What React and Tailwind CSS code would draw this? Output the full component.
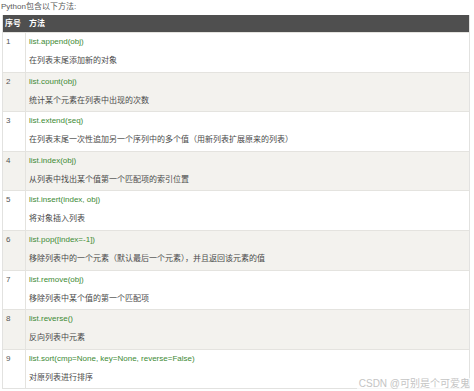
const methods = [
  ["list.append(obj)", "在列表末尾添加新的对象"],
  ["list.count(obj)", "统计某个元素在列表中出现的次数"],
  ["list.extend(seq)", "在列表末尾一次性追加另一个序列中的多个值（用新列表扩展原来的列表）"],
  ["list.index(obj)", "从列表中找出某个值第一个匹配项的索引位置"],
  ["list.insert(index, obj)", "将对象插入列表"],
  ["list.pop([index=-1])", "移除列表中的一个元素（默认最后一个元素），并且返回该元素的值"],
  ["list.remove(obj)", "移除列表中某个值的第一个匹配项"],
  ["list.reverse()", "反向列表中元素"],
  ["list.sort(cmp=None, key=None, reverse=False)", "对原列表进行排序"],
];

export default function App() {
  return (
    <div className="relative h-[391px] w-[474px] overflow-hidden bg-white font-['Liberation_Sans','Noto_Sans_CJK_SC',sans-serif] text-[8px]">
      <p className="h-[15px] pl-[1px] pt-[2px] leading-[10px] text-[#5a5a5a]">Python包含以下方法:</p>
      <div className="ml-[2px] w-[468px] border-x border-b border-[#e2e2e0]">
        <div className="flex h-[17px] items-center bg-[#4f4f4f] font-bold text-white">
          <span className="w-[24px] pl-[2px]">序号</span>
          <span className="pl-[2px]">方法</span>
        </div>
        {methods.map(([code, desc], i) => (
          <div
            key={code}
            className={`flex h-[39.6px] border-t border-[#e4e3df] ${i % 2 === 1 ? "bg-[#f3f2ee]" : "bg-white"}`}
          >
            <div className="w-[23px] border-r border-[#e4e3df] pl-[3px] pt-[4px] leading-[10px] text-[#555]">{i + 1}</div>
            <div className="flex flex-col gap-[9px] pl-[3px] pt-[4px] leading-[10px]">
              <span className="text-[#3d8a34]">{code}</span>
              <span className="text-[#4a4a4a]">{desc}</span>
            </div>
          </div>
        ))}
      </div>
      <span className="absolute right-[4px] top-[378px] bg-white/70 pl-[2px] text-[10px] leading-[12px] text-[#c4c4c4]">
        CSDN @可别是个可爱鬼
      </span>
    </div>
  );
}
